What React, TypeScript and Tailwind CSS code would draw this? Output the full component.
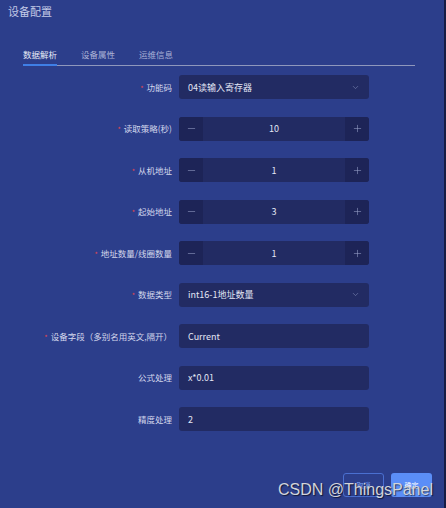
import { ChevronDown, Minus, Plus } from "lucide-react";

type Row =
  | { label: string; required?: boolean; kind: "select"; value: string }
  | { label: string; required?: boolean; kind: "number"; value: string }
  | { label: string; required?: boolean; kind: "text"; value: string };

const rows: Row[] = [
  { label: "功能码", required: true, kind: "select", value: "04读输入寄存器" },
  { label: "读取策略(秒)", required: true, kind: "number", value: "10" },
  { label: "从机地址", required: true, kind: "number", value: "1" },
  { label: "起始地址", required: true, kind: "number", value: "3" },
  { label: "地址数量/线圈数量", required: true, kind: "number", value: "1" },
  { label: "数据类型", required: true, kind: "select", value: "int16-1地址数量" },
  { label: "设备字段（多别名用英文,隔开）", required: true, kind: "text", value: "Current" },
  { label: "公式处理", kind: "text", value: "x*0.01" },
  { label: "精度处理", kind: "text", value: "2" },
];

const tabs = ["数据解析", "设备属性", "运维信息"];

function Field({ row }: { row: Row }) {
  if (row.kind === "number") {
    return (
      <div className="flex h-6 w-[190px] overflow-hidden rounded-[3px] bg-[#222b63] text-[9px] text-[#e4e7f5]">
        <div className="flex w-6 items-center justify-center bg-[#1d2457] text-[#9aa3cc]">
          <Minus size={11} strokeWidth={1.2} />
        </div>
        <div className="flex flex-1 items-center justify-center">{row.value}</div>
        <div className="flex w-6 items-center justify-center bg-[#1d2457] text-[#9aa3cc]">
          <Plus size={11} strokeWidth={1.2} />
        </div>
      </div>
    );
  }
  return (
    <div className="flex h-6 w-[190px] items-center justify-between rounded-[3px] bg-[#222b63] pl-[9px] pr-[9px] text-[9px] text-[#e4e7f5]">
      <span>{row.value}</span>
      {row.kind === "select" && <ChevronDown size={9} strokeWidth={1.4} className="text-[#8a93c0]" />}
    </div>
  );
}

export default function App() {
  return (
    <div
      className="relative flex h-[508px] w-[446px] overflow-hidden bg-[#2c3e8b]"
      style={{ fontFamily: '"Noto Sans CJK SC", "Liberation Sans", sans-serif' }}
    >
      <div className="flex flex-1 flex-col">
        <div className="pl-2 pt-[3px] text-[11px] text-[#c3c9e6]">设备配置</div>

        <div className="ml-[23px] mr-[29px] mt-[28px] flex border-b border-[#8f97bc]">
          {tabs.map((t, i) => (
            <div
              key={t}
              className={
                i === 0
                  ? "-mb-px w-[34px] border-b-2 border-[#3f7fe6] pb-[4px] text-[8.5px] text-[#e8ebf7]"
                  : "ml-6 pb-[4px] text-[8.5px] text-[#aab1d6]"
              }
            >
              {t}
            </div>
          ))}
        </div>

        <div className="mt-[9px] flex flex-col gap-[17.5px]">
          {rows.map((row) => (
            <div key={row.label} className="flex items-center">
              <div className="w-[179px] pr-[7px] text-right text-[8.5px] text-[#d3d7ec]">
                {row.required && <span className="mr-[3px] text-[7px] text-[#e5484d]">*</span>}
                {row.label}
              </div>
              <Field row={row} />
            </div>
          ))}
        </div>

        <div className="mr-[12px] mt-auto mb-[11px] flex justify-end gap-[7px]">
          <div className="flex h-6 w-[41px] items-center justify-center rounded-[3px] border border-[#4a6fd0] text-[7px] text-[#7fa4f5]">
            取消
          </div>
          <div className="flex h-6 w-[41px] items-center justify-center rounded-[3px] bg-[#5b8ef7] text-[7px] text-white">
            确定
          </div>
        </div>
      </div>

      <div className="w-[2px] bg-[#161c45]" />

      <div
        className="pointer-events-none absolute left-[278px] top-[478px] text-[16px] text-[#d2d4da]"
        style={{ fontFamily: '"Liberation Sans", Arial, sans-serif', textShadow: "1px 1px 1px rgba(0,0,0,0.6)" }}
      >
        CSDN @ThingsPanel
      </div>
    </div>
  );
}
